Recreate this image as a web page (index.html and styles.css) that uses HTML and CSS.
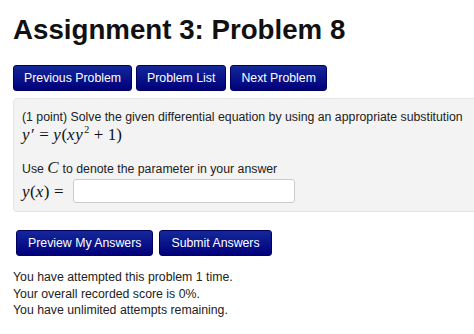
FILE: index.html
```html
<!DOCTYPE html>
<html lang="en">
<head>
  <meta charset="UTF-8" />
  <title>Assignment 3: Problem 8</title>
  <link rel="stylesheet" href="styles.css">
</head>
<body>

<h1 class="page-title">Assignment 3: Problem 8</h1>

<!-- problem navigation -->
<div class="nav-buttons">
  <button class="btn">Previous Problem</button>
  <button class="btn">Problem List</button>
  <button class="btn">Next Problem</button>
</div>

<!-- problem body -->
<div class="problem">
  <div class="statement">(1 point) Solve the given differential equation by using an appropriate substitution</div>
  <div class="math-line"><span class="mi">y</span><span class="prime">&prime;</span><span class="mo">=</span><span class="mi">y</span>(<span class="mi">x</span><span class="mi">y</span><sup class="sup">2</sup><span class="mo">+</span>1)</div>

  <div class="hint">Use <span class="mi big">C</span> to denote the parameter in your answer</div>
  <div class="answer-row">
    <span class="math"><span class="mi">y</span>(<span class="mi">x</span>)<span class="mo">=</span></span>
    <input class="answer" type="text">
  </div>
</div>

<div class="submit-buttons">
  <button class="btn">Preview My Answers</button>
  <button class="btn">Submit Answers</button>
</div>

<div class="attempts">
  <p>You have attempted this problem 1 time.</p>
  <p>Your overall recorded score is 0%.</p>
  <p>You have unlimited attempts remaining.</p>
</div>

</body>
</html>
```

FILE: styles.css
```css
body {
  margin: 0;
  padding: 0 0 0 13px;
  font-family: "Liberation Sans", Arial, sans-serif;
  font-size: 12.3px;
  color: #222;
  background: #fff;
  overflow: hidden;
}

.page-title {
  margin: 0;
  padding-top: 14px;
  font-size: 27.7px;
  line-height: 32px;
  font-weight: bold;
  color: #111;
}

.btn {
  font-family: "Liberation Sans", Arial, sans-serif;
  font-size: 12.3px;
  color: #fff;
  background: linear-gradient(to bottom, #14289a, #00007a);
  border: 1px solid #000060;
  border-radius: 3px;
  height: 26px;
  padding: 0 10px;
  cursor: pointer;
}

.nav-buttons {
  display: flex;
  gap: 4px;
  margin-top: 19px;
}

.problem {
  margin-top: 7px;
  width: 480px;
  height: 114px;
  box-sizing: border-box;
  padding: 10px 8px;
  background: #f3f3f3;
  border: 1px solid #e4e4e4;
  border-radius: 4px;
}

.statement {
  line-height: 16px;
}

.math-line,
.math {
  font-family: "Liberation Serif", "Times New Roman", serif;
  font-size: 17px;
  line-height: 19px;
  color: #111;
}

.mi {
  font-family: "Liberation Serif", "Times New Roman", serif;
  font-style: italic;
  font-size: 17px;
  margin-right: 0.5px;
}

.prime {
  margin-left: 1px;
}

.mo {
  margin: 0 4.5px;
}

.sup {
  font-size: 10px;
  vertical-align: 7px;
  line-height: 0;
  margin-left: 1px;
}

.hint {
  margin-top: 16px;
  line-height: 16px;
}

.answer-row {
  display: flex;
  align-items: center;
  margin-top: 2px;
}

.answer {
  width: 222px;
  height: 24px;
  box-sizing: border-box;
  margin-left: 5px;
  border: 1px solid #ccc;
  border-radius: 3px;
  background: #fff;
}

.submit-buttons {
  display: flex;
  gap: 6px;
  margin: 18px 0 0 3px;
}

.submit-buttons .btn {
  padding: 0 11px;
}

.attempts {
  margin-top: 13px;
}

.attempts p {
  margin: 0;
  line-height: 16.5px;
}
```
